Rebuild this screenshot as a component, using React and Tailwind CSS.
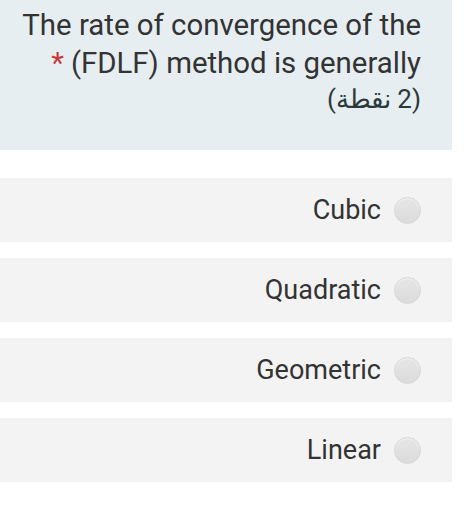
import React from "react";

const options = ["Cubic", "Quadratic", "Geometric", "Linear"];

function Radio() {
    return (
        <span className="inline-block shrink-0 w-[27px] h-[27px] rounded-full border border-[#d6d6d6] bg-gradient-to-b from-[#e6e6e6] to-[#dbdbdb] shadow-[inset_0_1px_1px_rgba(255,255,255,0.6)]"/>
    );
}

export default function App() {
    return (
        <div className="w-[475px] h-[509px] bg-white font-['Roboto',sans-serif] text-[#333333]">
            {/* Вопрос */}
            <div className="w-[452px] h-[150px] bg-[#e6eef1] pt-[6px] pr-[31px] text-right text-[29.4px] leading-[38px]">
                <div>The rate of convergence of the</div>
                <div>
                    <span className="text-[#c43b3b] mr-[7px]">*</span>
                    (FDLF) method is generally
                </div>
                <div className="text-[26px] leading-[34px] text-[#2a3a3a]" dir="ltr">
                    (<bdi>نقطة</bdi> 2)
                </div>
            </div>

            {/* Варианты */}
            <div className="flex flex-col gap-[16px] mt-[28px] w-[452px]">
                {options.map((o) => (
                    <div key={o} className="h-[64px] bg-[#f3f3f3] flex items-center justify-end pr-[31px] gap-[13px]">
                        <span className="text-[27px]">{o}</span>
                        <Radio/>
                    </div>
                ))}
            </div>
        </div>
    );
}
